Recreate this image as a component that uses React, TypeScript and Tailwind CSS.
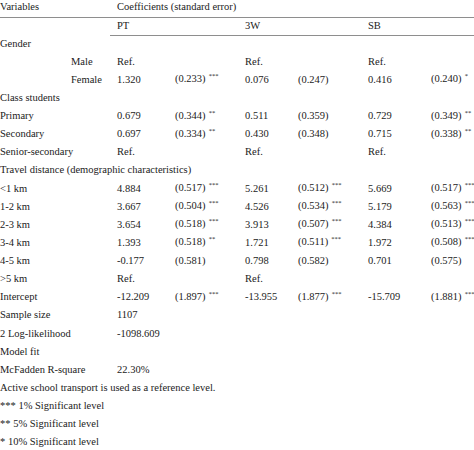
type Cell = { v?: string; se?: string; star?: string }

type Row = {
  label: string
  indent?: boolean
  pt?: Cell
  w3?: Cell
  sb?: Cell
}

const rows: Row[] = [
  { label: 'Gender' },
  { label: 'Male', indent: true, pt: { v: 'Ref.' }, w3: { v: 'Ref.' }, sb: { v: 'Ref.' } },
  {
    label: 'Female',
    indent: true,
    pt: { v: '1.320', se: '(0.233)', star: '***' },
    w3: { v: '0.076', se: '(0.247)' },
    sb: { v: '0.416', se: '(0.240)', star: '*' },
  },
  { label: 'Class students' },
  {
    label: 'Primary',
    pt: { v: '0.679', se: '(0.344)', star: '**' },
    w3: { v: '0.511', se: '(0.359)' },
    sb: { v: '0.729', se: '(0.349)', star: '**' },
  },
  {
    label: 'Secondary',
    pt: { v: '0.697', se: '(0.334)', star: '**' },
    w3: { v: '0.430', se: '(0.348)' },
    sb: { v: '0.715', se: '(0.338)', star: '**' },
  },
  { label: 'Senior-secondary', pt: { v: 'Ref.' }, w3: { v: 'Ref.' }, sb: { v: 'Ref.' } },
  { label: 'Travel distance (demographic characteristics)' },
  {
    label: '<1 km',
    pt: { v: '4.884', se: '(0.517)', star: '***' },
    w3: { v: '5.261', se: '(0.512)', star: '***' },
    sb: { v: '5.669', se: '(0.517)', star: '***' },
  },
  {
    label: '1-2 km',
    pt: { v: '3.667', se: '(0.504)', star: '***' },
    w3: { v: '4.526', se: '(0.534)', star: '***' },
    sb: { v: '5.179', se: '(0.563)', star: '***' },
  },
  {
    label: '2-3 km',
    pt: { v: '3.654', se: '(0.518)', star: '***' },
    w3: { v: '3.913', se: '(0.507)', star: '***' },
    sb: { v: '4.384', se: '(0.513)', star: '***' },
  },
  {
    label: '3-4 km',
    pt: { v: '1.393', se: '(0.518)', star: '**' },
    w3: { v: '1.721', se: '(0.511)', star: '***' },
    sb: { v: '1.972', se: '(0.508)', star: '***' },
  },
  {
    label: '4-5 km',
    pt: { v: '-0.177', se: '(0.581)' },
    w3: { v: '0.798', se: '(0.582)' },
    sb: { v: '0.701', se: '(0.575)' },
  },
  { label: '>5 km', pt: { v: 'Ref.' }, w3: { v: 'Ref.' } },
  {
    label: 'Intercept',
    pt: { v: '-12.209', se: '(1.897)', star: '***' },
    w3: { v: '-13.955', se: '(1.877)', star: '***' },
    sb: { v: '-15.709', se: '(1.881)', star: '***' },
  },
  { label: 'Sample size', pt: { v: '1107' } },
  { label: '2 Log-likelihood', pt: { v: '-1098.609' } },
  { label: 'Model fit' },
  { label: 'McFadden R-square', pt: { v: '22.30%' } },
]

const notes = [
  'Active school transport is used as a reference level.',
  '*** 1% Significant level',
  '** 5% Significant level',
  '* 10% Significant level',
]

function SE({ c }: { c?: Cell }) {
  if (!c?.se) return null
  return (
    <>
      {c.se}
      {c.star && <span className="relative -top-[4px] ml-[3px] text-[6.5px]">{c.star}</span>}
    </>
  )
}

export default function App() {
  return (
    <div className="w-[474px] h-[450px] overflow-hidden bg-white text-[#222] text-[10.5px] leading-[14px] font-['Liberation_Serif','Times_New_Roman',serif]">
      {/* Header */}
      <div className="flex h-[18px] border-b-[1.5px] border-[#8e8e8e]">
        <div className="w-[117px] shrink-0">Variables</div>
        <div className="whitespace-nowrap">Coefficients (standard error)</div>
      </div>
      <div className="flex h-[18px]">
        <div className="w-[110px] shrink-0" />
        <div className="flex flex-1 pt-[1px] border-b-[1.5px] border-[#8e8e8e]">
          <div className="w-[135px] pl-[7px] shrink-0">PT</div>
          <div className="w-[123px] shrink-0">3W</div>
          <div>SB</div>
        </div>
      </div>

      {/* Body */}
      <div className="-mt-[1.5px]">
        {rows.map((r, i) => (
          <div key={i} className="flex h-[18.14px] items-center whitespace-nowrap">
            <div className={`w-[117px] shrink-0 ${r.indent ? 'pl-[71px]' : ''}`}>{r.label}</div>
            <div className="w-[58px] shrink-0">{r.pt?.v}</div>
            <div className="w-[70px] shrink-0"><SE c={r.pt} /></div>
            <div className="w-[53px] shrink-0">{r.w3?.v}</div>
            <div className="w-[70px] shrink-0"><SE c={r.w3} /></div>
            <div className="w-[63px] shrink-0">{r.sb?.v}</div>
            <div className="shrink-0"><SE c={r.sb} /></div>
          </div>
        ))}
        {notes.map((n) => (
          <div key={n} className="flex h-[18.14px] items-center whitespace-nowrap">
            {n}
          </div>
        ))}
      </div>
    </div>
  )
}
